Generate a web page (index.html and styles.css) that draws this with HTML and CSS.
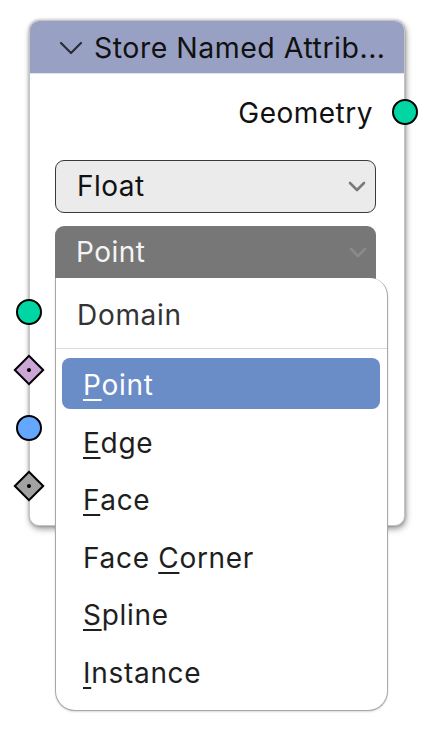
FILE: index.html
```html
<!DOCTYPE html>
<html>
<head>
<meta charset="utf-8">
<link rel="stylesheet" href="styles.css">
</head>
<body>
<div class="canvas">
  <div class="node">
    <div class="header">
      <svg class="hchev" width="24" height="14" viewBox="0 0 24 14"><path d="M2 2 L12 12 L22 2" fill="none" stroke="#2a2d36" stroke-width="2.2" stroke-linecap="round" stroke-linejoin="round"/></svg>
      <span class="title">Store Named Attrib...</span>
    </div>
    <div class="body">
      <div class="out-row">
        <span class="label">Geometry</span>
        <span class="socket circle green out"></span>
      </div>
      <div class="select light">
        <span>Float</span>
        <svg width="18" height="12" viewBox="0 0 18 12"><path d="M2 2 L9 9 L16 2" fill="none" stroke="#7a7a7a" stroke-width="2.6" stroke-linecap="round" stroke-linejoin="round"/></svg>
      </div>
      <div class="select dark">
        <span>Point</span>
        <svg width="18" height="12" viewBox="0 0 18 12"><path d="M2 2 L9 9 L16 2" fill="none" stroke="#8a8a8a" stroke-width="2.6" stroke-linecap="round" stroke-linejoin="round"/></svg>
      </div>
      <div class="in-rows">
        <div class="in-row"><span class="socket circle green in"></span></div>
        <div class="in-row"><span class="socket diamond purple in"><i></i></span></div>
        <div class="in-row"><span class="socket circle blue in"></span></div>
        <div class="in-row"><span class="socket diamond grey in"><i></i></span></div>
      </div>
    </div>
    <div class="menu">
      <div class="menu-title">Domain</div>
      <div class="menu-list">
        <div class="item active"><span class="u">P</span>oint</div>
        <div class="item"><span class="u">E</span>dge</div>
        <div class="item"><span class="u">F</span>ace</div>
        <div class="item">Face <span class="u">C</span>orner</div>
        <div class="item"><span class="u">S</span>pline</div>
        <div class="item"><span class="u">I</span>nstance</div>
      </div>
    </div>
  </div>
</div>
</body>
</html>
```
FILE: styles.css
```css
* { box-sizing: border-box; }
html, body { margin: 0; padding: 0; background: #ffffff; }
body { font-family: Inter, "Noto Sans", sans-serif; color: #1a1a1a; letter-spacing: 0.5px; }
.canvas { width: 431px; height: 740px; padding: 20px 0 0 29px; }
.node {
  position: relative;
  width: 376px;
  height: 506px;
  background: #fff;
  border-radius: 10px;
  border: 1px solid #c4c4c4;
  box-shadow: 1px 3px 6px rgba(0,0,0,0.4), 0 0 3px rgba(0,0,0,0.25);
}
.header {
  height: 53px;
  background: #98a1c3;
  border-radius: 9px 9px 0 0;
  display: flex;
  align-items: center;
  padding-left: 29px;
  gap: 11px;
  border-bottom: 1px solid #dfe2ec;
}
.hchev { margin-top: 1px; }
.title { font-size: 28.5px; color: #111; white-space: nowrap; }
.body { padding: 0 28px 0 25px; }
.out-row {
  height: 78px;
  display: flex;
  align-items: center;
  justify-content: flex-end;
  position: relative;
}
.label { font-size: 28px; color: #111; margin-right: 3px; }
.socket { position: absolute; display: block; }
.circle {
  width: 26px; height: 26px; border-radius: 50%;
  border: 2.5px solid #000;
}
.green { background: #00d6a3; }
.blue { background: #63a7fe; }
.out { right: -42px; top: 25px; }
.diamond {
  width: 22px; height: 22px;
  border: 2.5px solid #000;
  transform: rotate(45deg);
  display: flex; align-items: center; justify-content: center;
}
.diamond i { width: 4px; height: 4px; background: #000; border-radius: 50%; display: block; }
.purple { background: #cca6d6; }
.grey { background: #a1a1a1; }
.select {
  height: 53px;
  border-radius: 9px;
  display: flex;
  align-items: center;
  justify-content: space-between;
  padding: 0 9px 0 21px;
  font-size: 28px;
}
.select span { margin-top: -2px; }
.select.light { background: #ebebeb; border: 1px solid #3a3a3a; margin-top: 8px; color: #111; }
.select.dark { background: #777777; color: #f4f4f4; margin-top: 13px; border-radius: 9px 9px 0 0; }
.in-rows { padding-top: 3px; }
.in-row { height: 58px; position: relative; }
.in-row .circle { left: -39px; top: 17px; }
.in-row .diamond { left: -37px; top: 19px; }
.menu {
  position: absolute;
  left: 25px;
  top: 257px;
  width: 333px;
  height: 433px;
  background: #fff;
  border: 1px solid #a8a8a8;
  border-top: none;
  border-radius: 0 18px 20px 20px;
  box-shadow: 0 1px 2px rgba(0,0,0,0.15);
  letter-spacing: 0.7px;
}
.menu-title {
  height: 71px;
  display: flex;
  align-items: center;
  padding-left: 21px;
  font-size: 28px;
  color: #333;
  border-bottom: 1px solid #dcdcdc;
  padding-top: 4px;
}
.menu-list {
  display: flex;
  flex-direction: column;
  gap: 6.5px;
  padding: 9px 7px 0 6px;
}
.item {
  height: 51px;
  display: flex;
  align-items: center;
  padding-left: 21px;
  padding-top: 3px;
  font-size: 28px;
  color: #1e1e1e;
  border-radius: 8px;
  white-space: pre;
}
.item.active { background: #6a8dc8; color: #fff; }
.u { text-decoration: underline; text-decoration-thickness: 2px; text-underline-offset: 4px; }
```
